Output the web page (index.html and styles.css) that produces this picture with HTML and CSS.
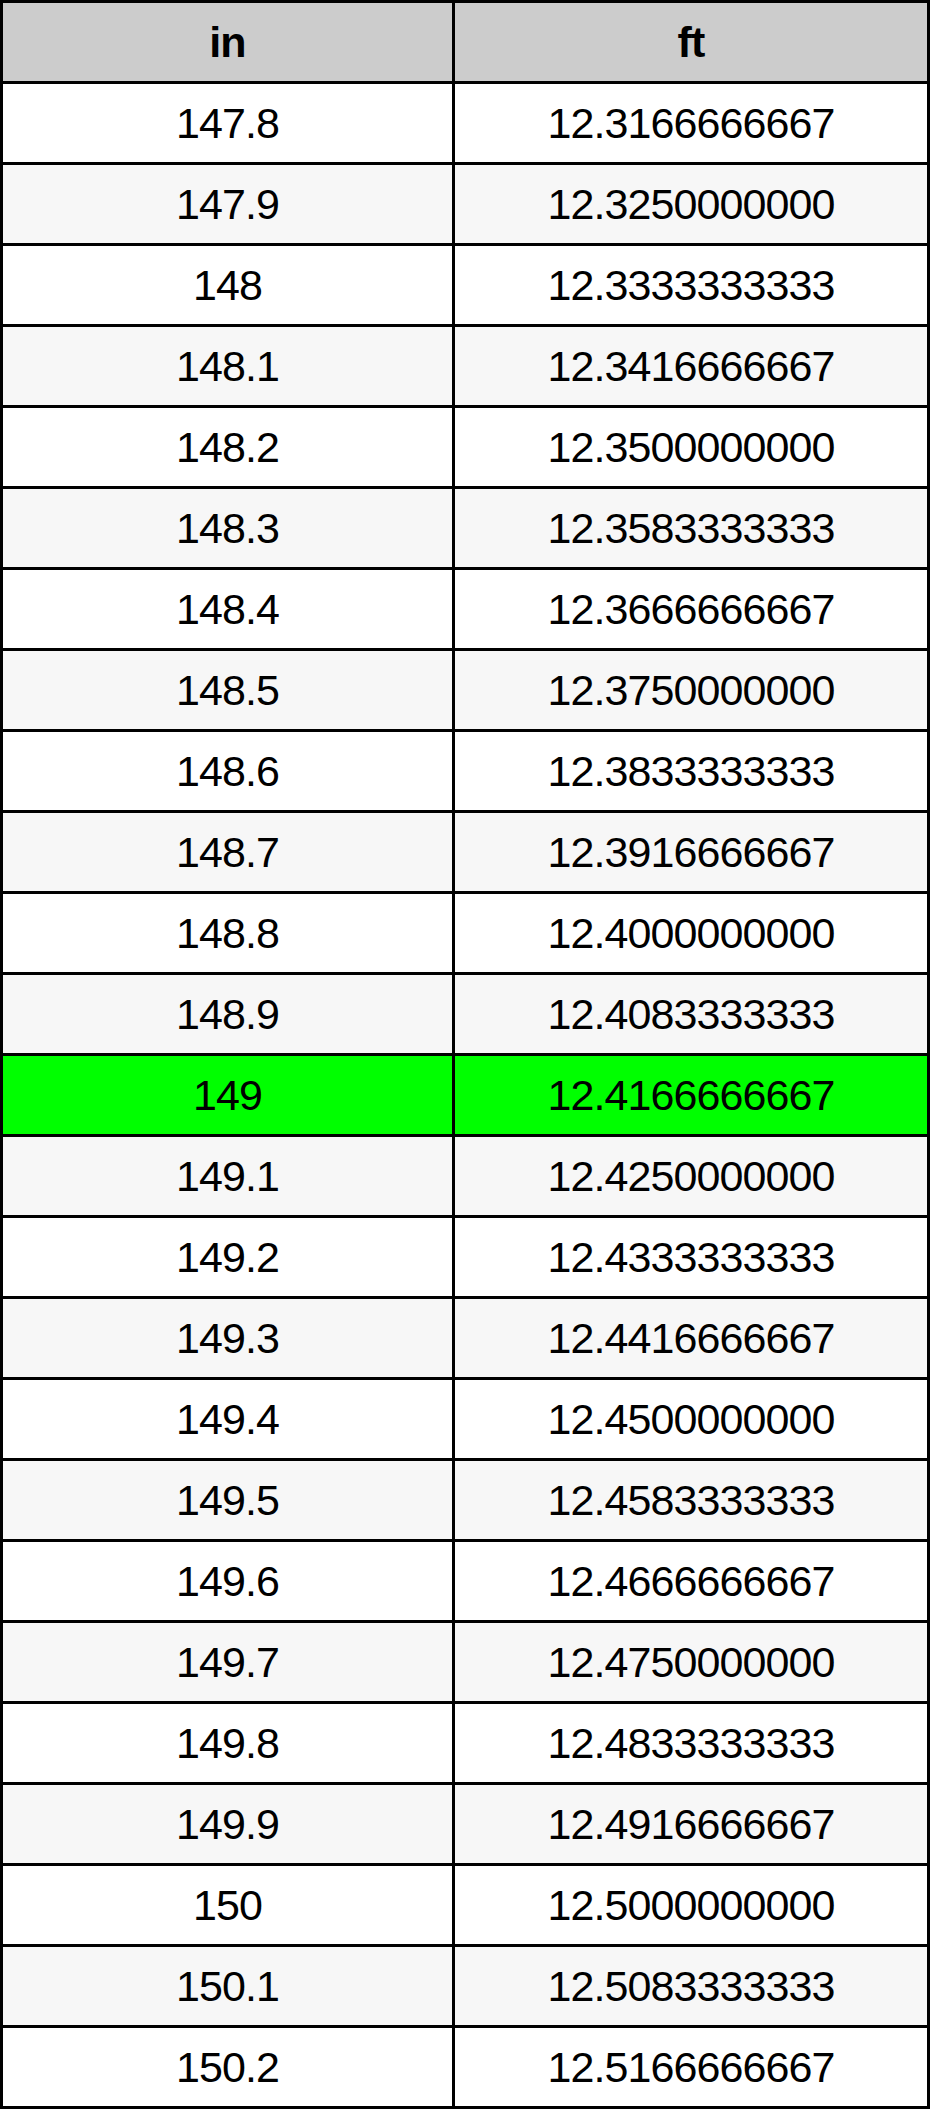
FILE: index.html
```html
<!DOCTYPE html>
<html lang="en">
<head>
<meta charset="utf-8">
<title>in to ft</title>
<link rel="stylesheet" href="styles.css">
</head>
<body>
<div class="conv-table">
  <div class="cell head">in</div><div class="cell head">ft</div>
  <div class="cell">147.8</div><div class="cell">12.3166666667</div>
  <div class="cell alt">147.9</div><div class="cell alt">12.3250000000</div>
  <div class="cell">148</div><div class="cell">12.3333333333</div>
  <div class="cell alt">148.1</div><div class="cell alt">12.3416666667</div>
  <div class="cell">148.2</div><div class="cell">12.3500000000</div>
  <div class="cell alt">148.3</div><div class="cell alt">12.3583333333</div>
  <div class="cell">148.4</div><div class="cell">12.3666666667</div>
  <div class="cell alt">148.5</div><div class="cell alt">12.3750000000</div>
  <div class="cell">148.6</div><div class="cell">12.3833333333</div>
  <div class="cell alt">148.7</div><div class="cell alt">12.3916666667</div>
  <div class="cell">148.8</div><div class="cell">12.4000000000</div>
  <div class="cell alt">148.9</div><div class="cell alt">12.4083333333</div>
  <div class="cell hl">149</div><div class="cell hl">12.4166666667</div>
  <div class="cell alt">149.1</div><div class="cell alt">12.4250000000</div>
  <div class="cell">149.2</div><div class="cell">12.4333333333</div>
  <div class="cell alt">149.3</div><div class="cell alt">12.4416666667</div>
  <div class="cell">149.4</div><div class="cell">12.4500000000</div>
  <div class="cell alt">149.5</div><div class="cell alt">12.4583333333</div>
  <div class="cell">149.6</div><div class="cell">12.4666666667</div>
  <div class="cell alt">149.7</div><div class="cell alt">12.4750000000</div>
  <div class="cell">149.8</div><div class="cell">12.4833333333</div>
  <div class="cell alt">149.9</div><div class="cell alt">12.4916666667</div>
  <div class="cell">150</div><div class="cell">12.5000000000</div>
  <div class="cell alt">150.1</div><div class="cell alt">12.5083333333</div>
  <div class="cell">150.2</div><div class="cell">12.5166666667</div>
</div>
</body>
</html>
```

FILE: styles.css
```css
html, body {
  margin: 0;
  padding: 0;
  background: #ffffff;
}

.conv-table {
  display: grid;
  grid-template-columns: 449px 472px;
  grid-auto-rows: 78px;
  gap: 3px;
  padding: 3px;
  width: 930px;
  box-sizing: border-box;
  background: #000000;
  font-family: "Liberation Sans", Arial, sans-serif;
  font-size: 43px;
  letter-spacing: -0.9px;
  color: #000000;
}

.cell {
  display: flex;
  align-items: center;
  justify-content: center;
  background: #ffffff;
}

.cell.alt {
  background: #f7f7f7;
}

.cell.head {
  background: #cccccc;
  font-weight: bold;
}

.cell.hl {
  background: #00ff00;
}
```
